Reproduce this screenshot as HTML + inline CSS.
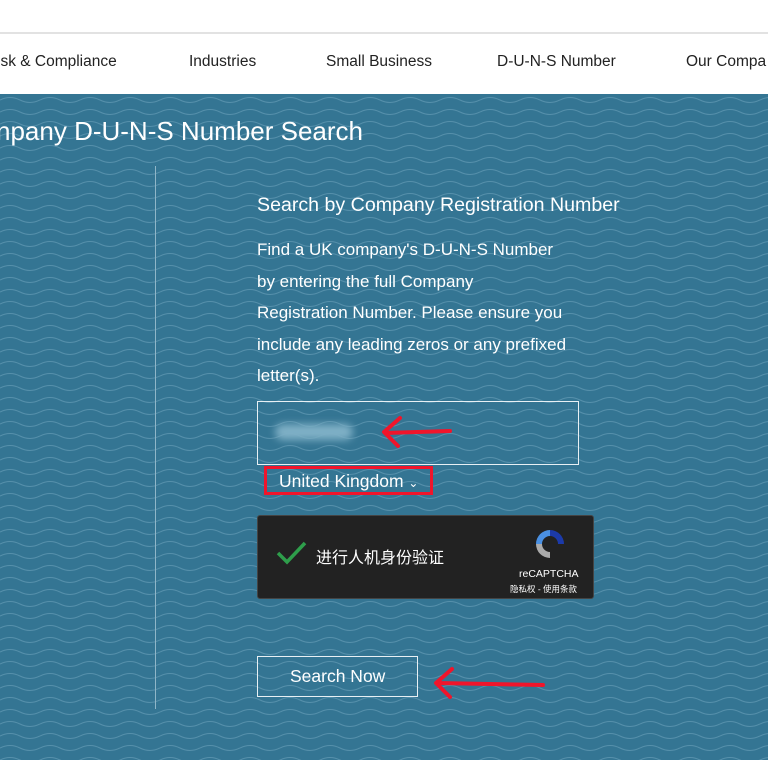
<!DOCTYPE html>
<html><head><meta charset="utf-8"><style>
*{margin:0;padding:0;box-sizing:border-box}
body{width:768px;height:760px;overflow:hidden;font-family:"Liberation Sans","Noto Sans CJK SC",sans-serif;background:#fff;position:relative}
.top{height:34px;border-bottom:2px solid #e2e2e2}
.nav{height:60px;position:relative;font-size:15.5px;color:#222}
.nav span{position:absolute;top:19px;white-space:nowrap}
.hero{position:absolute;top:94px;left:0;width:768px;height:666px;background:#347593}
.hero svg.bg{position:absolute;left:0;top:0}
.t{position:absolute;color:#fff;white-space:nowrap}
</style></head><body>
<div class="top"></div>
<div class="nav">
<span style="left:-3px">isk &amp; Compliance</span>
<span style="left:189px">Industries</span>
<span style="left:326px">Small Business</span>
<span style="left:497px">D-U-N-S Number</span>
<span style="left:686px">Our Compa</span>
</div>
<div class="hero">
<svg class="bg" width="768" height="666"><defs><pattern id="w" width="40" height="12" patternUnits="userSpaceOnUse"><path d="M0 6 Q10 1 20 6 T40 6" fill="none" stroke="#5690ab" stroke-width="1"/></pattern></defs><rect width="768" height="666" fill="url(#w)"/></svg>
<div class="t" style="left:-4px;top:22px;font-size:26px">npany D-U-N-S Number Search</div>
<div style="position:absolute;left:155px;top:72px;width:1px;height:543px;background:#8fb6c8"></div>
<div class="t" style="left:257px;top:100px;font-size:19.6px">Search by Company Registration Number</div>
<div class="t" style="left:257px;top:140px;font-size:17px;line-height:31.5px">Find a UK company's D-U-N-S Number<br>by entering the full Company<br>Registration Number. Please ensure you<br>include any leading zeros or any prefixed<br>letter(s).</div>
<div style="position:absolute;left:257px;top:307px;width:322px;height:64px;border:1.5px solid #e8f0f4"></div>
<div style="position:absolute;left:275px;top:330px;width:78px;height:16px;border-radius:8px;background:#7fb0c6;filter:blur(4px)"></div>
<div style="position:absolute;left:264px;top:372px;width:169px;height:29px;border:3px solid #f0152b"></div>
<div class="t" style="left:279px;top:377px;font-size:17.5px">United Kingdom <span style="font-size:12px">&#8964;</span></div>
<div style="position:absolute;left:257px;top:421px;width:337px;height:84px;background:#222;border:1px solid #444;border-radius:3px"></div>
<svg style="position:absolute;left:276px;top:446px" width="32" height="26"><path d="M2 13 L11 22 L29 3" fill="none" stroke="#2e9e4b" stroke-width="3.5"/></svg>
<div class="t" style="left:316px;top:450px;font-size:16px">进行人机身份验证</div>
<svg style="position:absolute;left:532px;top:432px" width="36" height="36"><path d="M18 4 A14 14 0 0 1 32 18 L26 18 A8 8 0 0 0 18 10Z" fill="#1c3aa9"/><path d="M4 18 A14 14 0 0 1 18 4 L18 10 A8 8 0 0 0 10 18Z" fill="#4a90e2"/><path d="M18 32 A14 14 0 0 1 4 18 L10 18 A8 8 0 0 0 18 26Z" fill="#aaa"/></svg>
<div class="t" style="left:519px;top:474px;font-size:10.5px">reCAPTCHA</div>
<div class="t" style="left:510px;top:489px;font-size:8.5px">隐私权 - 使用条款</div>
<div style="position:absolute;left:257px;top:562px;width:161px;height:41px;border:1.5px solid #e8f0f4"></div>
<div class="t" style="left:290px;top:572px;font-size:17.5px">Search Now</div>
<svg style="position:absolute;left:0;top:0" width="768" height="666"><g fill="none" stroke="#f0152b" stroke-width="4" stroke-linecap="round" stroke-linejoin="round"><path d="M450 337 L385 339 M400 324 L384 338 L398 352"/><path d="M543 591 L437 589 M452 575 L436 589 L450 603"/></g></svg>
</div>
</body></html>
